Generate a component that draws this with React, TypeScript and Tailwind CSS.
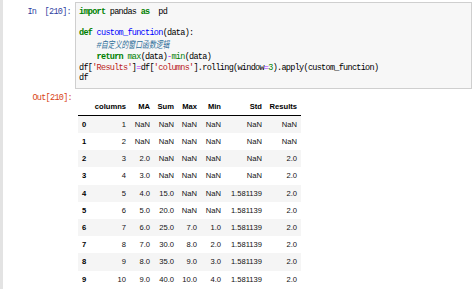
import React from 'react';

const mono = "font-['Liberation_Mono','Courier_New',monospace] text-[8.5px] tracking-[-0.7px] leading-[10.7px]";

const columns = ['columns', 'MA', 'Sum', 'Max', 'Min', 'Std', 'Results'];

const rows: string[][] = [
  ['0', '1', 'NaN', 'NaN', 'NaN', 'NaN', 'NaN', 'NaN'],
  ['1', '2', 'NaN', 'NaN', 'NaN', 'NaN', 'NaN', 'NaN'],
  ['2', '3', '2.0', 'NaN', 'NaN', 'NaN', 'NaN', '2.0'],
  ['3', '4', '3.0', 'NaN', 'NaN', 'NaN', 'NaN', '2.0'],
  ['4', '5', '4.0', '15.0', 'NaN', 'NaN', '1.581139', '2.0'],
  ['5', '6', '5.0', '20.0', 'NaN', 'NaN', '1.581139', '2.0'],
  ['6', '7', '6.0', '25.0', '7.0', '1.0', '1.581139', '2.0'],
  ['7', '8', '7.0', '30.0', '8.0', '2.0', '1.581139', '2.0'],
  ['8', '9', '8.0', '35.0', '9.0', '3.0', '1.581139', '2.0'],
  ['9', '10', '9.0', '40.0', '10.0', '4.0', '1.581139', '2.0'],
];

const gridCols = 'grid grid-cols-[13px_39px_24px_24px_23px_24px_41px_35px]';

function CodeCell() {
  const kw = 'font-bold text-[#008000]';
  const str = 'text-[#ba2121]';
  const op = 'text-[#aa22ff]';
  return (
    <div className={`${mono} flex-1 mr-[2px] border border-[#cfcfcf] bg-[#f7f7f7] pl-[3px] py-[4px] text-black whitespace-pre`}>
      <div>
        <span className={kw}>import</span> pandas <span className={kw}>as</span>  pd
      </div>
      <div>&nbsp;</div>
      <div>
        <span className={kw}>def</span> <span className="text-[#0000ff]">custom_function</span>(data):
      </div>
      <div>
        {'    '}
        <span className="italic text-[#2f6f9a]">
          #
          <span className="inline-block origin-left scale-x-[0.72] font-['Noto_Sans_CJK_SC',sans-serif] text-[9.5px] tracking-normal leading-[10px]">
            自定义的窗口函数逻辑
          </span>
        </span>
      </div>
      <div>
        {'    '}
        <span className={kw}>return</span> <span className="text-[#008000]">max</span>(data)
        <span className={op}>-</span>
        <span className="text-[#008000]">min</span>(data)
      </div>
      <div>
        df[<span className={str}>'Results'</span>]<span className={op}>=</span>df[<span className={str}>'columns'</span>].rolling(window
        <span className={op}>=</span>
        <span className="text-[#008000]">3</span>).apply(custom_function)
      </div>
      <div>df</div>
    </div>
  );
}

function DataTable() {
  return (
    <div className="font-['Liberation_Sans',Arial,sans-serif] text-[7.6px] text-black mt-[6px]">
      <div className={`${gridCols} h-[17px] items-center border-b border-black font-bold`}>
        <div />
        {columns.map((c) => (
          <div key={c} className="text-right pr-[4px]">
            {c}
          </div>
        ))}
      </div>
      {rows.map((r, i) => (
        <div key={i} className={`${gridCols} h-[17.2px] items-center ${i % 2 === 0 ? 'bg-[#f5f5f5]' : ''}`}>
          <div className="pl-[4px] font-bold">{r[0]}</div>
          {r.slice(1).map((v, j) => (
            <div key={j} className="text-right pr-[4px] text-[#111]">
              {v}
            </div>
          ))}
        </div>
      ))}
    </div>
  );
}

export default function App() {
  return (
    <div className="flex w-[474px] h-[289px] overflow-hidden bg-white">
      <div className="w-[3px] shrink-0 bg-[#e3e3e3]" />
      <div className="flex-1 flex flex-col">
        <div className="flex pt-[2px]">
          <div className={`${mono} w-[72px] shrink-0 text-right pr-[4px] pt-[5px] text-[#303f9f] [word-spacing:4px]`}>
            In [210]:
          </div>
          <CodeCell />
        </div>
        <div className="flex pt-[4px]">
          <div className={`${mono} w-[72px] shrink-0 text-right pr-[3px] text-[#d84315]`}>Out[210]:</div>
          <div className="pl-[3px]">
            <DataTable />
          </div>
        </div>
      </div>
    </div>
  );
}
